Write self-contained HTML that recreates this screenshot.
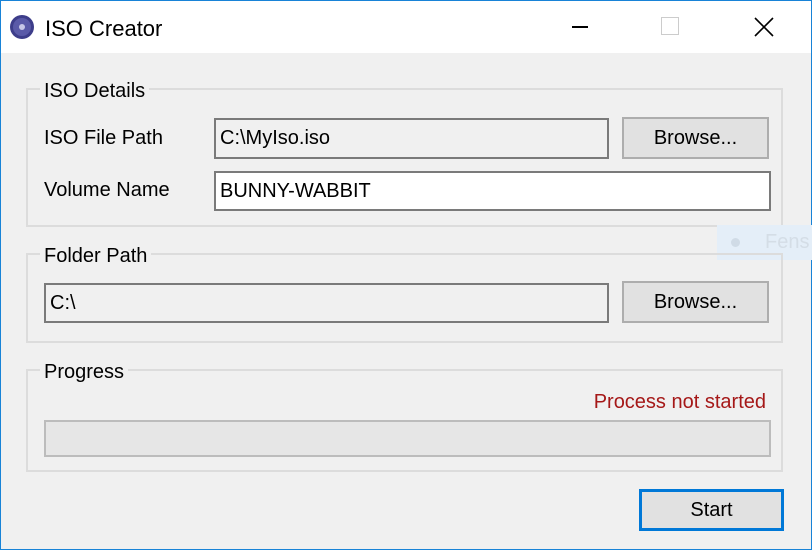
<!DOCTYPE html>
<html><head><style>
body{margin:0;width:812px;height:550px;overflow:hidden;font-family:"Liberation Sans",sans-serif;}
.win{position:absolute;left:0;top:0;width:810px;height:548px;border:1px solid #1883d7;background:#f0f0f0;}
.title{position:absolute;left:0;top:0;width:810px;height:52px;background:#fff;}
.t{position:absolute;font-size:20px;color:#000;white-space:nowrap;}
.grp{position:absolute;border:2px solid #dcdcdc;box-sizing:border-box;}
.lg{position:absolute;background:#f0f0f0;padding:0 4px;font-size:20px;top:-10px;left:12px;line-height:22px;}
.tb{position:absolute;box-sizing:border-box;border:2px solid #7a7a7a;background:#f0f0f0;font-size:20px;padding:6px 4px;line-height:24px;}
.btn{position:absolute;box-sizing:border-box;border:2px solid #adadad;background:#e1e1e1;font-size:20px;text-align:center;line-height:38px;}
</style></head><body>
<div class="win">
<div class="title">
 <svg style="position:absolute;left:8px;top:13px" width="26" height="26"><circle cx="13" cy="13" r="12" fill="#3d3d8a"/><circle cx="13" cy="13" r="9" fill="#5a5aa8"/><circle cx="13" cy="13" r="3" fill="#c8c8e8"/></svg>
 <div class="t" style="left:44px;top:15px;font-size:22px">ISO Creator</div>
 <div style="position:absolute;left:571px;top:25px;width:16px;height:2px;background:#000"></div>
 <div style="position:absolute;left:660px;top:16px;width:18px;height:18px;border:1px solid #ccc;box-sizing:border-box"></div>
 <svg style="position:absolute;left:752px;top:15px" width="22" height="22"><path d="M2 2L20 20M20 2L2 20" stroke="#000" stroke-width="1.6"/></svg>
</div>
<div class="grp" style="left:25px;top:87px;width:757px;height:139px"><div class="lg">ISO Details</div></div>
<div class="t" style="left:43px;top:126px">ISO File Path</div>
<div class="tb" style="left:213px;top:117px;width:395px;height:41px">C:\MyIso.iso</div>
<div class="btn" style="left:621px;top:116px;width:147px;height:42px">Browse...</div>
<div class="t" style="left:43px;top:178px">Volume Name</div>
<div class="tb" style="left:213px;top:170px;width:557px;height:40px;background:#fff">BUNNY-WABBIT</div>
<div style="position:absolute;left:716px;top:224px;width:96px;height:35px;background:#e4eef8"><span style="position:absolute;left:14px;top:13px;width:9px;height:9px;border-radius:50%;background:#d0dbe6"></span><span style="position:absolute;left:48px;top:6px;font-size:20px;color:#d4dde6">Fens</span></div>
<div class="grp" style="left:25px;top:252px;width:757px;height:90px"><div class="lg">Folder Path</div></div>
<div class="tb" style="left:43px;top:282px;width:565px;height:40px">C:\</div>
<div class="btn" style="left:621px;top:280px;width:147px;height:42px">Browse...</div>
<div class="grp" style="left:25px;top:368px;width:757px;height:103px"><div class="lg">Progress</div></div>
<div class="t" style="right:45px;top:390px;color:#a51818">Process not started</div>
<div style="position:absolute;left:43px;top:419px;width:727px;height:37px;box-sizing:border-box;border:2px solid #bcbcbc;background:#e6e6e6"></div>
<div class="btn" style="left:638px;top:488px;width:145px;height:42px;border:3px solid #0078d7;line-height:36px">Start</div>
</div>
</body></html>
